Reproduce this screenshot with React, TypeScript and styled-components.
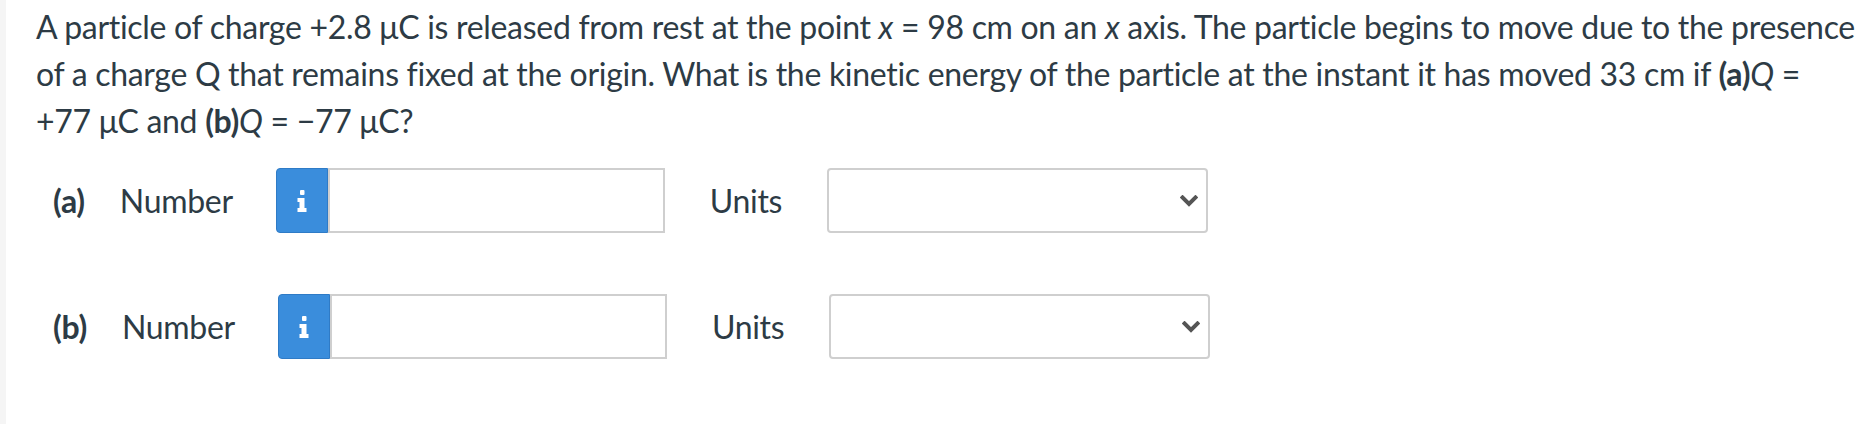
import React from 'react';
import styled, {createGlobalStyle} from 'styled-components';

const GlobalStyle = createGlobalStyle`
  html, body {
    margin: 0;
    padding: 0;
    background: #ffffff;
  }
  body {
    font-family: Lato, "Open Sans", "Liberation Sans", sans-serif;
    color: #2d3b45;
  }
`;

const Page = styled.div`
  display: flex;
  min-height: 424px;
`;

const Stripe = styled.div`
  width: 6px;
  flex-shrink: 0;
  background-color: #f5f5f5;
`;

const Content = styled.div`
  flex: 1;
  padding: 3px 16px 0 30px;
`;

const Question = styled.p`
  margin: 0;
  font-size: 32px;
  letter-spacing: -0.3px;
  line-height: 47px;
`;

const Rows = styled.div`
  display: flex;
  flex-direction: column;
  gap: 61px;
  margin-top: 24px;
  padding-left: 17px;
`;

const Row = styled.div`
  display: flex;
  align-items: center;
  height: 65px;
  font-size: 32px;
  letter-spacing: -0.3px;
`;

const PartLabel = styled.span`
  font-weight: 700;
  margin-right: 35px;
`;

const FieldLabel = styled.span<{$gap: number}>`
  margin-right: ${(p) => p.$gap}px;
`;

const InfoButton = styled.button`
  display: flex;
  align-items: center;
  justify-content: center;
  width: 52px;
  height: 65px;
  padding: 0;
  border: 1px solid #2f7bc6;
  border-radius: 4px 0 0 4px;
  background-color: #3a8ddc;
  cursor: pointer;
`;

const NumberInput = styled.input`
  box-sizing: border-box;
  width: 337px;
  height: 65px;
  border: 2px solid #cfcfcf;
  border-radius: 0;
  margin: 0 45px 0 0;
  outline: none;
  background: #fff;
`;

const SelectBox = styled.div`
  box-sizing: border-box;
  display: flex;
  align-items: center;
  justify-content: flex-end;
  width: 381px;
  height: 65px;
  padding-right: 8px;
  border: 2px solid #cfcfcf;
  border-radius: 4px;
  background: #fff;
  cursor: pointer;
`;

const Italic = styled.i`
  font-style: italic;
`;

const InfoIcon = () => (
  <svg width="10" height="22" viewBox="0 0 10 22">
    <rect x="3" y="0" width="4.5" height="5" rx="1" fill="#fff" />
    <path d="M0.5 8 H7.5 V18 H9.5 V22 H0.5 V18 H2.5 V12 H0.5 Z" fill="#fff" />
  </svg>
);

const Chevron = () => (
  <svg width="18" height="12" viewBox="0 0 18 12">
    <polyline
      points="2.5,2.5 9,9 15.5,2.5"
      fill="none"
      stroke="#555"
      strokeWidth="4"
      strokeLinecap="square"
    />
  </svg>
);

type AnswerRowProps = {
  part: string;
};

const AnswerRow: React.FunctionComponent<AnswerRowProps> = ({part}) => (
  <Row>
    <PartLabel>({part})</PartLabel>
    <FieldLabel $gap={43}>Number</FieldLabel>
    <InfoButton type="button" aria-label="info">
      <InfoIcon />
    </InfoButton>
    <NumberInput type="text" />
    <FieldLabel $gap={45}>Units</FieldLabel>
    <SelectBox>
      <Chevron />
    </SelectBox>
  </Row>
);

const App: React.FunctionComponent = () => {
  return (
    <Page>
      <GlobalStyle />
      <Stripe />
      <Content>
        <Question>
          A particle of charge +2.8&nbsp;μC is released from rest at the point <Italic>x</Italic> = 98&nbsp;cm
          on an <Italic>x</Italic> axis. The particle begins to move due to the presence of a charge Q
          that remains fixed at the origin. What is the kinetic energy of the particle at the instant
          it has moved 33&nbsp;cm if <b>(a)</b><Italic>Q</Italic> = +77&nbsp;μC and <b>(b)</b><Italic>Q</Italic> = −77&nbsp;μC?
        </Question>
        <Rows>
          <AnswerRow part="a" />
          <AnswerRow part="b" />
        </Rows>
      </Content>
    </Page>
  );
};

export default App;
